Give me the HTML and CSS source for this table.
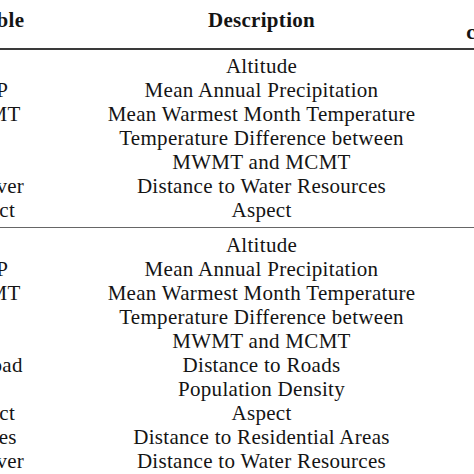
FILE: index.html
```html
<!DOCTYPE html>
<html lang="en">
<head>
<meta charset="utf-8">
<title>Variables</title>
<link rel="stylesheet" href="styles.css">
</head>
<body>
<div class="frame">
  <table class="vars">
    <colgroup>
      <col class="c-var">
      <col class="c-desc">
      <col class="c-coef">
    </colgroup>
    <thead>
      <tr>
        <th>Variable</th>
        <th>Description</th>
        <th>Percent<br>contribution</th>
      </tr>
    </thead>
    <tbody class="group">
      <tr><td>Alt</td><td>Altitude</td><td></td></tr>
      <tr><td>MAP</td><td>Mean Annual Precipitation</td><td></td></tr>
      <tr><td>MWMT</td><td>Mean Warmest Month Temperature</td><td></td></tr>
      <tr><td>TD</td><td>Temperature Difference between<br>MWMT and MCMT</td><td></td></tr>
      <tr><td>DisRiver</td><td>Distance to Water Resources</td><td></td></tr>
      <tr><td>Aspect</td><td>Aspect</td><td></td></tr>
    </tbody>
    <tbody class="group next">
      <tr><td>Alt</td><td>Altitude</td><td></td></tr>
      <tr><td>MAP</td><td>Mean Annual Precipitation</td><td></td></tr>
      <tr><td>MWMT</td><td>Mean Warmest Month Temperature</td><td></td></tr>
      <tr><td>TD</td><td>Temperature Difference between<br>MWMT and MCMT</td><td></td></tr>
      <tr><td>DisRoad</td><td>Distance to Roads</td><td></td></tr>
      <tr><td>PD</td><td>Population Density</td><td></td></tr>
      <tr><td>Aspect</td><td>Aspect</td><td></td></tr>
      <tr><td>Houses</td><td>Distance to Residential Areas</td><td></td></tr>
      <tr><td>DisRiver</td><td>Distance to Water Resources</td><td></td></tr>
    </tbody>
  </table>
</div>
</body>
</html>
```

FILE: styles.css
```css
html, body {
  margin: 0;
  padding: 0;
  background: #ffffff;
}

.frame {
  width: 474px;
  height: 474px;
  overflow: hidden;
  background: #ffffff;
}

.vars {
  table-layout: fixed;
  width: 681px;
  margin-left: -93px;
  margin-top: -4px;
  border-collapse: collapse;
  border-spacing: 0;
  font-family: "Liberation Serif", "Times New Roman", serif;
  font-size: 21px;
  letter-spacing: 0.3px;
  line-height: 24px;
  color: #141414;
}

.c-var { width: 156px; }
.c-desc { width: 397px; }
.c-coef { width: 128px; }

.vars th {
  font-weight: bold;
  text-align: center;
  vertical-align: middle;
  padding: 0 0 4px 0;
  border-bottom: 2px solid #3a3a3a;
  white-space: nowrap;
}

.vars td {
  padding: 0;
  text-align: center;
  vertical-align: middle;
  white-space: nowrap;
}

.group tr:first-child td {
  padding-top: 4px;
}

.group tr:last-child td {
  padding-bottom: 5px;
}

.next tr:first-child td {
  border-top: 1px solid #666666;
  padding-top: 5px;
}
```
